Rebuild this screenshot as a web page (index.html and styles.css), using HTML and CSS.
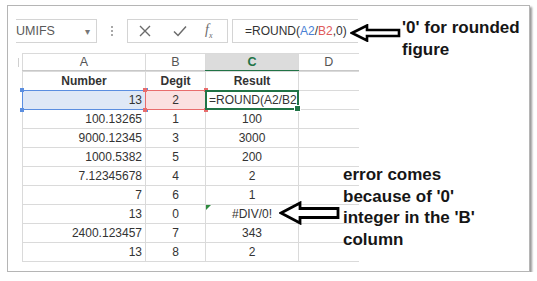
FILE: index.html
```html
<!DOCTYPE html>
<html lang="en">
<head>
  <meta charset="UTF-8" />
  <title>ROUND with #DIV/0!</title>
  <link rel="stylesheet" href="styles.css">
</head>
<body>

<div class="frame">
  <div class="toolbar">
    <div class="name-box">
      <span>UMIFS</span>
      <span class="drop">&#9662;</span>
    </div>
    <div class="grip"><i></i><i></i><i></i></div>
    <div class="fn-box">
      <svg width="12" height="12" viewBox="0 0 12 12"><path d="M1 1 L11 11 M11 1 L1 11" stroke="#6b6b6b" stroke-width="1.4" fill="none"/></svg>
      <svg width="14" height="12" viewBox="0 0 14 12"><path d="M1 6.5 L5 10.5 L13 1.5" stroke="#6b6b6b" stroke-width="1.5" fill="none"/></svg>
      <span class="fx">f<sub>x</sub></span>
    </div>
    <div class="formula">=ROUND(<span class="ref-a">A2</span>/<span class="ref-b">B2</span>,0)</div>
  </div>

  <table class="sheet">
    <colgroup>
      <col style="width: 123px">
      <col style="width: 60px">
      <col style="width: 93px">
      <col style="width: 60px">
    </colgroup>
    <thead>
      <tr class="col-head">
        <th>A</th>
        <th>B</th>
        <th class="active">C</th>
        <th>D</th>
      </tr>
    </thead>
    <tbody></tbody>
  </table>

  <svg class="arrow arrow-top" width="52" height="18" viewBox="0 0 52 18">
    <path d="M2 9 L17 1.5 L17 6 L49 6 L49 12 L17 12 L17 16.5 Z" fill="#fff" stroke="#000" stroke-width="2.6" stroke-linejoin="miter"/>
  </svg>
  <p class="note note-top">'0' for rounded<br>figure</p>

  <svg class="arrow arrow-bottom" width="62" height="24" viewBox="0 0 62 24">
    <path d="M2 12 L21 2 L21 7.5 L59 7.5 L59 16.5 L21 16.5 L21 22 Z" fill="#fff" stroke="#000" stroke-width="2.8" stroke-linejoin="miter"/>
  </svg>
  <p class="note note-bottom">error comes<br>because of '0'<br>integer in the 'B'<br>column</p>
</div>

<script>
  const rows = [
    ['Number', 'Degit', 'Result'],
    ['13', '2', '=ROUND(A2/B2'],
    ['100.13265', '1', '100'],
    ['9000.12345', '3', '3000'],
    ['1000.5382', '5', '200'],
    ['7.12345678', '4', '2'],
    ['7', '6', '1'],
    ['13', '0', '#DIV/0!'],
    ['2400.123457', '7', '343'],
    ['13', '8', '2']
  ];

  const tbody = document.querySelector('.sheet tbody');
  rows.forEach((r, i) => {
    const tr = document.createElement('tr');
    if (i === 0) tr.className = 'title-row';
    tr.innerHTML = `
      <td class="num">${r[0]}</td>
      <td class="mid">${r[1]}</td>
      <td class="mid">${r[2]}</td>
      <td></td>
    `;
    if (i === 1) {
      tr.children[0].classList.add('sel-a');
      tr.children[1].classList.add('sel-b');
      tr.children[2].className = 'sel-c';
    }
    if (r[2] === '#DIV/0!') tr.children[2].classList.add('err');
    tbody.appendChild(tr);
  });
</script>

</body>
</html>
```

FILE: styles.css
```css
* {
  box-sizing: border-box;
}
body {
  margin: 0;
  background: #fff;
  font-family: 'Liberation Sans', Arial, sans-serif;
  color: #333;
}

.frame {
  position: relative;
  margin: 5px 0 0 7px;
  width: 523px;
  height: 267px;
  border: 1px solid #b5b5b5;
  box-shadow: 2px 2px 2px #9a9a9a;
  background: #fff;
  padding: 13px 0 0 8px;
}

/* formula bar */
.toolbar {
  display: flex;
  align-items: center;
  height: 24px;
}
.name-box {
  width: 81px;
  height: 24px;
  border: 1px solid #d4d4d4;
  border-left: none;
  display: flex;
  align-items: center;
  justify-content: space-between;
  padding-right: 6px;
  font-size: 12.5px;
  color: #5a5a5a;
}
.name-box .drop {
  font-size: 10px;
  color: #777;
}
.grip {
  width: 30px;
  display: flex;
  flex-direction: column;
  align-items: center;
  gap: 2px;
}
.grip i {
  display: block;
  width: 2px;
  height: 2px;
  background: #a8a8a8;
}
.fn-box {
  width: 101px;
  height: 24px;
  border: 1px solid #d4d4d4;
  display: flex;
  align-items: center;
  padding-left: 11px;
  gap: 22px;
}
.fx {
  font-family: 'Liberation Serif', serif;
  font-style: italic;
  font-size: 14px;
  color: #6b6b6b;
  margin-left: -4px;
}
.fx sub {
  font-size: 8px;
}
.formula {
  margin-left: 4px;
  width: 126px;
  height: 24px;
  border: 1px solid #d4d4d4;
  border-right: none;
  padding-left: 12px;
  font-size: 12px;
  line-height: 22px;
  color: #333;
}
.ref-a {
  color: #4a7fd4;
}
.ref-b {
  color: #e05a5a;
}

/* grid */
.sheet {
  position: relative;
  margin: 10px 0 0 6px;
  border-collapse: collapse;
  table-layout: fixed;
  width: 336px;
  font-size: 12px;
}
.sheet::before {
  content: "";
  position: absolute;
  left: -5px;
  top: 4px;
  height: 9px;
  border-left: 1px solid #d0d0d0;
}
.sheet th,
.sheet td {
  border: 1px solid #dadada;
  height: 19px;
  padding: 0 3px;
  white-space: nowrap;
}
.sheet td:last-child,
.sheet th:last-child {
  border-right: none;
}
.col-head th {
  height: 17px;
  font-weight: normal;
  font-size: 12.5px;
  color: #555;
  border-bottom-color: #c8c8c8;
}
.col-head th.active {
  background: #dcdcdc;
  color: #217346;
  font-weight: bold;
  border-bottom: 2px solid #217346;
}
.title-row td {
  font-weight: bold;
  text-align: center;
}
.num {
  text-align: right;
}
.mid {
  text-align: center;
}

/* references inside the formula */
.sel-a,
.sel-b,
.sel-c,
.err {
  position: relative;
}
.sel-a {
  background: #dfe8f6;
}
.sel-b {
  background: #fbe0e0;
}
.sel-a::before,
.sel-b::before {
  content: "";
  position: absolute;
  inset: -1px;
  border: 1.5px solid #5b8ee0;
}
.sel-b::before {
  border-color: #e86c6c;
}
.sel-a::after,
.sel-b::after {
  content: "";
  position: absolute;
  inset: -3px;
  --c: #5b8ee0;
  background:
    linear-gradient(var(--c), var(--c)) top left / 4px 4px no-repeat,
    linear-gradient(var(--c), var(--c)) top right / 4px 4px no-repeat,
    linear-gradient(var(--c), var(--c)) bottom left / 4px 4px no-repeat,
    linear-gradient(var(--c), var(--c)) bottom right / 4px 4px no-repeat;
}
.sel-b::after {
  --c: #e86c6c;
}
.sel-c {
  text-align: left;
  overflow: visible;
  padding-left: 2px;
}
.sel-c::before {
  content: "";
  position: absolute;
  inset: -1px;
  border: 2px solid #217346;
}
.sel-c::after {
  content: "";
  position: absolute;
  right: -3px;
  bottom: -3px;
  width: 5px;
  height: 5px;
  background: #217346;
  border: 1px solid #fff;
}
.err::before {
  content: "";
  position: absolute;
  left: 0;
  top: 0;
  border-top: 5px solid #2e8b3e;
  border-right: 5px solid transparent;
}

/* annotations */
.arrow {
  position: absolute;
}
.arrow-top {
  left: 342px;
  top: 18px;
}
.arrow-bottom {
  left: 271px;
  top: 195px;
}
.note {
  position: absolute;
  margin: 0;
  font-family: 'Liberation Sans', Arial, sans-serif;
  font-weight: bold;
  font-size: 17px;
  line-height: 21.5px;
  color: #161616;
}
.note-top {
  left: 394px;
  top: 11px;
  line-height: 22px;
}
.note-bottom {
  left: 335px;
  top: 158px;
}
```
